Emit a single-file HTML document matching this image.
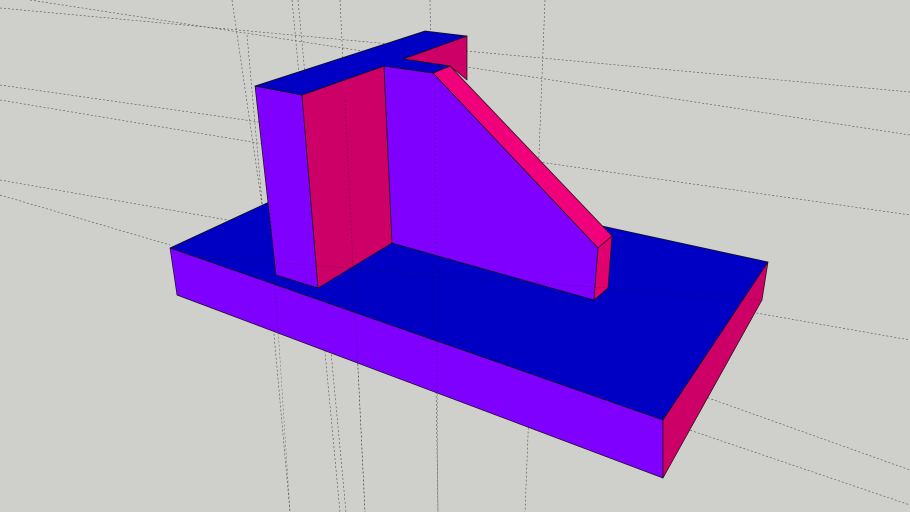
<!DOCTYPE html>
<html><head><style>html,body{margin:0;padding:0;background:#cfcfcb;width:910px;height:512px;overflow:hidden}</style></head>
<body>
<svg width="910" height="512" viewBox="0 0 910 512" xmlns="http://www.w3.org/2000/svg">
<rect width="910" height="512" fill="#cfcfcb"/>
<g stroke="#555" stroke-width="0.6" stroke-dasharray="2,2" fill="none">
<line x1="30" y1="0" x2="910" y2="135"/>
<line x1="0" y1="8" x2="910" y2="92"/>
<line x1="0" y1="85" x2="910" y2="215"/>
<line x1="0" y1="100" x2="300" y2="150"/>
<line x1="0" y1="180" x2="910" y2="340"/>
<line x1="0" y1="195" x2="170" y2="245"/>
<line x1="660" y1="420" x2="910" y2="505"/>
<line x1="700" y1="395" x2="910" y2="470"/>
<line x1="247" y1="35" x2="290" y2="512"/>
<line x1="232" y1="0" x2="262" y2="205"/>
<line x1="292" y1="0" x2="340" y2="512"/>
<line x1="298" y1="0" x2="346" y2="512"/>
<line x1="340" y1="0" x2="365" y2="512"/>
<line x1="430" y1="0" x2="438" y2="512"/>
<line x1="545" y1="0" x2="525" y2="512"/>
</g>
<g stroke="#111" stroke-width="0.7" stroke-linejoin="round">
<polygon points="170,248 340,169 768,262 663,420" fill="#0000c4"/>
<polygon points="170,248 663,420 663,478 177,295" fill="#8000ff"/>
<polygon points="663,420 768,262 762,300 663,478" fill="#cc0066"/>
<polygon points="255,86 302,95 318,288 276,275" fill="#8000ff"/>
<polygon points="302,95 384,66 392,243 318,288" fill="#cc0066"/>
<polygon points="384,66 433,73 598,248 594,300 392,243" fill="#8000ff"/>
<polygon points="433,73 450,66 612,236 598,248" fill="#f0007a"/>
<polygon points="598,248 612,236 608,288 594,300" fill="#e0006e"/>
<polygon points="403,59 467,36 467,80 450,66" fill="#cc0066"/>
<polygon points="255,86 425,31 467,36 403,59 450,66 433,73 384,66 302,95" fill="#0000c4"/>
</g>
<g stroke="#222" stroke-width="0.5" stroke-dasharray="2,2" fill="none" opacity="0.6">
<line x1="270" y1="205" x2="290" y2="512"/>
<line x1="345" y1="100" x2="365" y2="512"/>
<line x1="435" y1="70" x2="438" y2="512"/>
<line x1="180" y1="255" x2="760" y2="300"/>
</g>
</svg>
</body></html>
